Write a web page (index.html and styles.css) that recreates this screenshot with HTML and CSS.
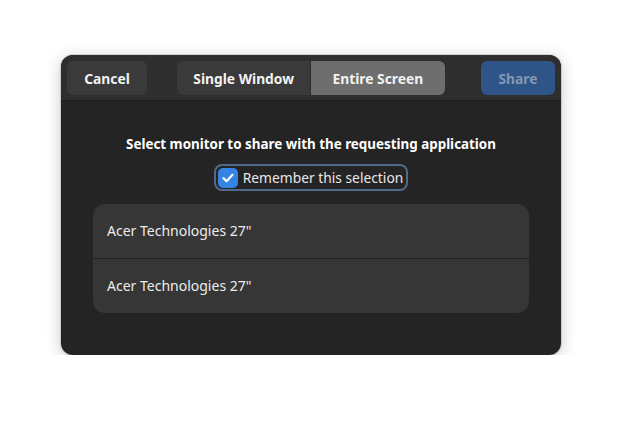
FILE: index.html
```html
<!DOCTYPE html>
<html lang="en">
<head>
  <meta charset="UTF-8">
  <title>Screen Share</title>
  <link rel="stylesheet" href="styles.css">
</head>
<body>
  <!-- Share dialog -->
  <div class="dialog">
    <div class="headerbar">
      <div class="start">
        <button type="button" class="btn">Cancel</button>
      </div>
      <div class="linked">
        <button type="button" class="btn">Single Window</button>
        <button type="button" class="btn active">Entire Screen</button>
      </div>
      <div class="end">
        <button type="button" class="btn suggested" disabled>Share</button>
      </div>
    </div>

    <div class="content">
      <div class="title">Select monitor to share with the requesting application</div>
      <label class="check-row">
        <span class="check">
          <svg width="14" height="14" viewBox="0 0 14 14"><path d="M2.5 7.2 L5.6 10.2 L11.5 3.8" fill="none" stroke="#fff" stroke-width="2.2" stroke-linecap="round" stroke-linejoin="round"/></svg>
        </span>
        Remember this selection
      </label>
      <div class="monitor-list">
        <div class="row">Acer Technologies 27"</div>
        <div class="row">Acer Technologies 27"</div>
      </div>
    </div>
  </div>
</body>
</html>
```

FILE: styles.css
```css
body {
  margin: 0;
  background: #fff;
  font-family: "Noto Sans", "Open Sans", sans-serif;
  color: #fff;
}

.dialog {
  width: 500px;
  margin: 55px auto 0;
  background: #242424;
  border-radius: 12px;
  overflow: hidden;
  box-shadow: 0 3px 16px rgba(0, 0, 0, 0.22), 0 0 0 1px rgba(0, 0, 0, 0.12);
}

/* Header bar */
.headerbar {
  display: grid;
  grid-template-columns: 1fr auto 1fr;
  align-items: center;
  padding: 6px;
  height: 33px;
  background: #2e2e2e;
  border-bottom: 1px solid #1c1c1c;
}

.end {
  text-align: right;
}

.btn {
  height: 34px;
  padding: 0 17px;
  border: none;
  border-radius: 6px;
  background: #3a3a3a;
  color: #f2f2f2;
  font-family: inherit;
  font-size: 13.8px;
  font-weight: bold;
}

.start .btn {
  width: 80px;
}

/* Linked buttons share one width */
.linked {
  display: grid;
  grid-template-columns: 1fr 1fr;
}

.linked .btn {
  padding: 0 16px;
  border-radius: 0;
}

.linked .btn:first-child {
  border-radius: 6px 0 0 6px;
  border-right: 1px solid #2a2a2a;
}

.linked .btn:last-child {
  border-radius: 0 6px 6px 0;
}

.btn.active {
  background: #6e6e6e;
}

.btn.suggested {
  width: 74px;
  background: #2f5487;
  color: #8398b3;
}

/* Content */
.content {
  display: flex;
  flex-direction: column;
  align-items: center;
  padding: 33px 32px 42px;
}

.title {
  font-size: 13.4px;
  font-weight: bold;
  line-height: 20px;
}

.check-row {
  display: flex;
  align-items: center;
  gap: 5px;
  margin-top: 10px;
  padding: 0 3px 0 2px;
  height: 23px;
  border: 2px solid #4f6a89;
  border-radius: 8px;
  font-size: 13.8px;
  color: #e8e8e8;
}

.check {
  display: flex;
  align-items: center;
  justify-content: center;
  width: 20px;
  height: 20px;
  border-radius: 5px;
  background: #3584e4;
}

.monitor-list {
  align-self: stretch;
  margin-top: 13px;
  background: #363636;
  border-radius: 12px;
  overflow: hidden;
}

.row {
  height: 54px;
  line-height: 54px;
  padding: 0 14px;
  font-size: 14px;
  color: #ececec;
}

.row + .row {
  border-top: 1px solid #242424;
}
```
